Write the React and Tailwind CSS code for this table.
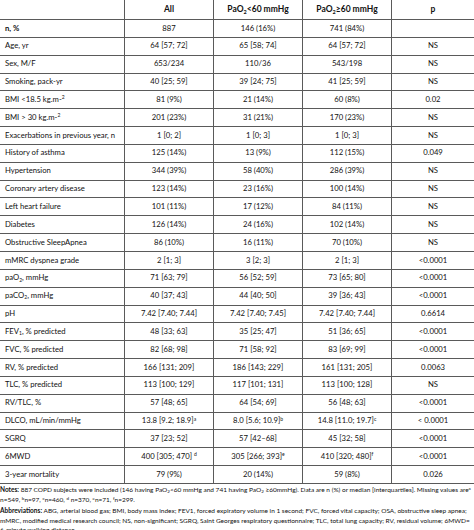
import React from "react";

const rows = [
  [<b key="n">n, %</b>, "887", "146 (16%)", "741 (84%)", ""],
  ["Age, yr", "64 [57; 72]", "65 [58; 74]", "64 [57; 72]", "NS"],
  ["Sex, M/F", "653/234", "110/36", "543/198", "NS"],
  ["Smoking, pack-yr", "40 [25; 59]", "39 [24; 75]", "41 [25; 59]", "NS"],
  [<span key="b1">BMI &lt;18.5 kg.m-<sup className="text-[5px]">2</sup></span>, "81 (9%)", "21 (14%)", "60 (8%)", "0.02"],
  [<span key="b2">BMI &gt; 30 kg.m-<sup className="text-[5px]">2</sup></span>, "201 (23%)", "31 (21%)", "170 (23%)", "NS"],
  ["Exacerbations in previous year, n", "1 [0; 2]", "1 [0; 3]", "1 [0; 3]", "NS"],
  ["History of asthma", "125 (14%)", "13 (9%)", "112 (15%)", "0.049"],
  ["Hypertension", "344 (39%)", "58 (40%)", "286 (39%)", "NS"],
  ["Coronary artery disease", "123 (14%)", "23 (16%)", "100 (14%)", "NS"],
  ["Left heart failure", "101 (11%)", "17 (12%)", "84 (11%)", "NS"],
  ["Diabetes", "126 (14%)", "24 (16%)", "102 (14%)", "NS"],
  ["Obstructive SleepApnea", "86 (10%)", "16 (11%)", "70 (10%)", "NS"],
  ["mMRC dyspnea grade", "2 [1; 3]", "3 [2; 3]", "2 [1; 3]", "<0.0001"],
  [<span key="p1">paO<sub className="text-[5px]">2</sub>, mmHg</span>, "71 [63; 79]", "56 [52; 59]", "73 [65; 80]", "<0.0001"],
  [<span key="p2">paCO<sub className="text-[5px]">2</sub>, mmHg</span>, "40 [37; 43]", "44 [40; 50]", "39 [36; 43]", "<0.0001"],
  ["pH", "7.42 [7.40; 7.44]", "7.42 [7.40; 7.45]", "7.42 [7.40; 7.44]", "0.6614"],
  [<span key="f1">FEV<sub className="text-[5px]">1</sub>, % predicted</span>, "48 [33; 63]", "35 [25; 47]", "51 [36; 65]", "<0.0001"],
  ["FVC, % predicted", "82 [68; 98]", "71 [58; 92]", "83 [69; 99]", "<0.0001"],
  ["RV, % predicted", "166 [131; 209]", "186 [143; 229]", "161 [131; 205]", "0.0063"],
  ["TLC, % predicted", "113 [100; 129]", "117 [101; 131]", "113 [100; 128]", "NS"],
  ["RV/TLC, %", "57 [48; 65]", "64 [54; 69]", "56 [48; 63]", "<0.0001"],
  [
    "DLCO, mL/min/mmHg",
    <span key="d1">13.8 [9.2; 18.9]<sup className="text-[5px]">a</sup></span>,
    <span key="d2">8.0 [5.6; 10.9]<sup className="text-[5px]">b</sup></span>,
    <span key="d3">14.8 [11.0; 19.7]<sup className="text-[5px]">c</sup></span>,
    "< 0.0001",
  ],
  ["SGRQ", "37 [23; 52]", "57 [42–68]", "45 [32; 58]", "<0.0001"],
  [
    "6MWD",
    <span key="m1">400 [305; 470] <sup className="text-[5px]">d</sup></span>,
    <span key="m2">305 [266; 393]<sup className="text-[5px]">e</sup></span>,
    <span key="m3">410 [320; 480]<sup className="text-[5px]">f</sup></span>,
    "<0.0001",
  ],
  ["3-year mortality", "79 (9%)", "20 (14%)", "59 (8%)", "0.026"],
];

const gridCols = "grid grid-cols-[124px_89px_89px_89px_83px]";

function Cell({ children, first, header }) {
  return (
    <div
      className={
        "flex items-center border-b border-[#5a5a5a] " +
        (first ? "pl-[5px] justify-start" : "justify-center border-l") +
        (header ? " font-bold text-[8.5px]" : "")
      }
    >
      <span className="whitespace-nowrap leading-none">{children}</span>
    </div>
  );
}

export default function App() {
  return (
    <div
      className="w-[474px] h-[530px] overflow-hidden bg-white text-[#111]"
      style={{ fontFamily: "Lato, 'Open Sans', sans-serif" }}
    >
      <div className="text-[7.7px]">
        <div className={gridCols + " h-[20px]"}>
          <Cell first header>{""}</Cell>
          <Cell header>All</Cell>
          <Cell header>
            PaO<sub className="text-[5.5px]">2</sub>&lt;60 mmHg
          </Cell>
          <Cell header>
            PaO<sub className="text-[5.5px]">2</sub>≥60 mmHg
          </Cell>
          <Cell header>p</Cell>
        </div>
        {rows.map((r, i) => (
          <div key={i} className={gridCols + " h-[17.85px]"}>
            {r.map((c, j) => (
              <Cell key={j} first={j === 0}>
                {c}
              </Cell>
            ))}
          </div>
        ))}
      </div>
      <div className="w-[520px] mt-[1px] text-[6.5px] leading-[10px] whitespace-nowrap">
        <div>
          <b>Notes:</b> 887 COPD subjects were included (146 having PaO
          <sub className="text-[4.5px]">2</sub>&lt;60 mmHg and 741 having PaO
          <sub className="text-[4.5px]">2</sub> ≥60mmHg). Data are n (%) or median [interquartiles]. Missing values are
          <sup className="text-[4.5px]">a</sup>
        </div>
        <div>
          n=549, <sup className="text-[4.5px]">b</sup>n=97, <sup className="text-[4.5px]">c</sup>n=460,{" "}
          <sup className="text-[4.5px]">d</sup> n=370, <sup className="text-[4.5px]">e</sup>n=71,{" "}
          <sup className="text-[4.5px]">f</sup>n=299.
        </div>
        <div className="mt-[1px]">
          <b>Abbreviations:</b> ABG, arterial blood gas; BMI, body mass index; FEV1, forced expiratory volume in 1 second; FVC,
          forced vital capacity; OSA, obstructive sleep apnea;
        </div>
        <div>
          mMRC, modified medical research council; NS, non-significant; SGRQ, Saint Georges respiratory questionnaire; TLC,
          total lung capacity; RV, residual volume; 6MWD=
        </div>
        <div className="leading-[8px]">6-minute walking distance.</div>
      </div>
    </div>
  );
}
